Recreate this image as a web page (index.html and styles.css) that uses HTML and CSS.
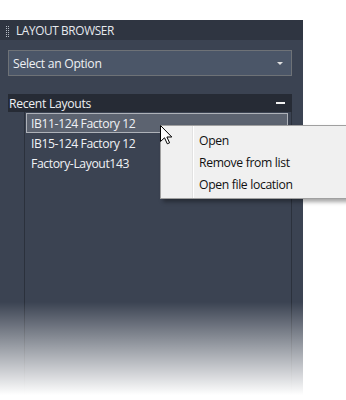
FILE: index.html
```html
<!DOCTYPE html>
<html>
<head>
<meta charset="utf-8">
<link rel="stylesheet" href="styles.css">
</head>
<body>
<div class="panel">
  <div class="titlebar">
    <svg class="grip" width="3" height="11" viewBox="0 0 3 11">
      <rect x="0" y="0" width="1" height="1"/><rect x="2" y="0" width="1" height="1"/>
      <rect x="0" y="2" width="1" height="1"/><rect x="2" y="2" width="1" height="1"/>
      <rect x="0" y="4" width="1" height="1"/><rect x="2" y="4" width="1" height="1"/>
      <rect x="0" y="6" width="1" height="1"/><rect x="2" y="6" width="1" height="1"/>
      <rect x="0" y="8" width="1" height="1"/><rect x="2" y="8" width="1" height="1"/>
      <rect x="0" y="10" width="1" height="1"/><rect x="2" y="10" width="1" height="1"/>
    </svg>
    <span class="title">LAYOUT BROWSER</span>
  </div>
  <div class="content">
    <div class="select">
      <span>Select an Option</span>
      <span class="caret"></span>
    </div>
    <div class="section-head">
      <span>Recent Layouts</span>
      <span class="minus"></span>
    </div>
    <div class="tree">
      <div class="item selected">IB11-124 Factory 12</div>
      <div class="item">IB15-124 Factory 12</div>
      <div class="item">Factory-Layout143</div>
    </div>
  </div>
</div>
<div class="fade"></div>
<div class="menu">
  <div class="menu-item">Open</div>
  <div class="menu-item">Remove from list</div>
  <div class="menu-item">Open file location</div>
</div>
<svg class="cursor" width="13" height="20" viewBox="0 0 13 20">
  <path d="M0.5 0.5 L0.5 16.5 L4.5 12.8 L7.3 18.8 L9.6 17.8 L6.9 12 L11.8 12 Z" fill="#fff" stroke="#000" stroke-width="1" stroke-linejoin="miter"/>
</svg>
</body>
</html>
```
FILE: styles.css
```css
html, body {
  margin: 0;
  padding: 0;
  background: #ffffff;
}
body {
  width: 346px;
  height: 400px;
  position: relative;
  overflow: hidden;
  font-family: "Open Sans", "Noto Sans", sans-serif;
  font-size: 12px;
}
.panel {
  margin-top: 20px;
  width: 303px;
  height: 380px;
  background: #3b4352;
  display: flex;
  flex-direction: column;
}
.titlebar {
  height: 20px;
  background: #2f3541;
  display: flex;
  align-items: center;
  color: #e6e9ee;
  flex: none;
}
.grip {
  fill: #b4bac3;
  margin-left: 6px;
  margin-right: 7px;
  margin-top: 2px;
}
.title {
  font-size: 11.8px;
  letter-spacing: -0.35px;
}
.content {
  flex: 1;
  display: flex;
  flex-direction: column;
  padding: 10px 11px 0 8px;
}
.select {
  height: 24px;
  border: 1px solid #6e7277;
  background: #4b5668;
  display: flex;
  align-items: center;
  justify-content: space-between;
  padding: 0 8px 0 4px;
  color: #eef0f3;
  font-size: 12.2px;
  letter-spacing: -0.3px;
}
.caret {
  width: 0;
  height: 0;
  border-left: 3px solid transparent;
  border-right: 3px solid transparent;
  border-top: 3px solid #e0e0e0;
}
.section-head {
  margin-top: 18px;
  height: 18px;
  background: #262b35;
  display: flex;
  align-items: center;
  justify-content: space-between;
  padding: 0 7px 0 1px;
  color: #eef0f3;
  font-size: 12.2px;
  letter-spacing: -0.3px;
}
.minus {
  width: 9px;
  height: 2px;
  background: #f2f2f2;
}
.tree {
  flex: 1;
  margin-left: 16px;
  border-left: 1px solid #2b313c;
  border-right: 1px solid #2b313c;
  padding: 1px 3px 0 1px;
  display: flex;
  flex-direction: column;
}
.item {
  height: 20px;
  line-height: 21px;
  padding-left: 5px;
  color: #f0f2f5;
  font-size: 12.2px;
  letter-spacing: -0.4px;
  box-sizing: border-box;
}
.item.selected {
  background: #5c6370;
  border: 1px solid #aeb2b9;
  padding-left: 4px;
  line-height: 19px;
}
.fade {
  position: absolute;
  left: 0;
  top: 302px;
  width: 346px;
  height: 98px;
  background: linear-gradient(rgba(255,255,255,0), #ffffff 95%);
}
.menu {
  position: absolute;
  left: 160px;
  top: 125px;
  width: 190px;
  height: 66px;
  padding: 3px 0;
  background: #f0f0f0;
  border: 1px solid #a0a0a0;
  box-shadow: 3px 3px 4px rgba(0,0,0,0.35);
  background-image: linear-gradient(to right, transparent 31px, #e2e2e2 31px, #e2e2e2 32px, #ffffff 32px, #ffffff 33px, transparent 33px);
}
.menu-item {
  height: 22px;
  line-height: 23px;
  padding-left: 38px;
  color: #111;
  font-size: 12.2px;
  letter-spacing: -0.35px;
}
.cursor {
  position: absolute;
  left: 160px;
  top: 125px;
}
```
